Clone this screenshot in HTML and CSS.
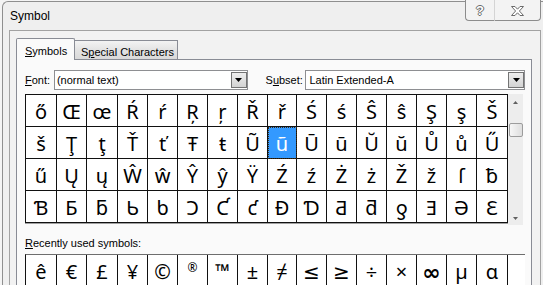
FILE: index.html
```html
<!DOCTYPE html>
<html>
<head>
<meta charset="utf-8">
<title>Symbol</title>
<link rel="stylesheet" href="styles.css">
</head>
<body>
<div class="window">
  <div class="titlebar">
    <span class="title">Symbol</span>
    <div class="caption-btns">
      <div class="cbtn help"><span class="qmark">?</span></div>
      <div class="cbtn close">
        <svg width="13" height="10" viewBox="0 0 13 10"><polygon points="0.5,0.5 4,0.5 6.5,3.2 9,0.5 12.5,0.5 8.4,5 12.5,9.5 9,9.5 6.5,6.8 4,9.5 0.5,9.5 4.6,5" fill="#fff" stroke="#6b6b6b" stroke-width="1"/></svg>
      </div>
    </div>
  </div>
  <div class="client">
    <div class="tabs">
      <div class="tab active"><u>S</u>ymbols</div>
      <div class="tab">S<u>p</u>ecial Characters</div>
    </div>
    <div class="pane">
      <div class="fields">
        <span class="lbl lbl-font"><u>F</u>ont:</span>
        <div class="combo combo-font">
          <span class="combo-text">(normal text)</span>
          <span class="drop"><svg width="7" height="4" viewBox="0 0 7 4"><polygon points="0,0 7,0 3.5,4" fill="#000"/></svg></span>
        </div>
        <span class="lbl lbl-subset">S<u>u</u>bset:</span>
        <div class="combo combo-subset">
          <span class="combo-text sub">Latin Extended-A</span>
          <span class="drop"><svg width="7" height="4" viewBox="0 0 7 4"><polygon points="0,0 7,0 3.5,4" fill="#000"/></svg></span>
        </div>
      </div>
      <div class="chart">
        <div class="grid">
          <div class="cell">ő</div><div class="cell">Œ</div><div class="cell">œ</div><div class="cell">Ŕ</div><div class="cell">ŕ</div><div class="cell">Ŗ</div><div class="cell">ŗ</div><div class="cell">Ř</div><div class="cell">ř</div><div class="cell">Ś</div><div class="cell">ś</div><div class="cell">Ŝ</div><div class="cell">ŝ</div><div class="cell">Ş</div><div class="cell">ş</div><div class="cell">Š</div>
          <div class="cell">š</div><div class="cell">Ţ</div><div class="cell">ţ</div><div class="cell">Ť</div><div class="cell">ť</div><div class="cell">Ŧ</div><div class="cell">ŧ</div><div class="cell">Ũ</div><div class="cell sel">ũ</div><div class="cell">Ū</div><div class="cell">ū</div><div class="cell">Ŭ</div><div class="cell">ŭ</div><div class="cell">Ů</div><div class="cell">ů</div><div class="cell">Ű</div>
          <div class="cell">ű</div><div class="cell">Ų</div><div class="cell">ų</div><div class="cell">Ŵ</div><div class="cell">ŵ</div><div class="cell">Ŷ</div><div class="cell">ŷ</div><div class="cell">Ÿ</div><div class="cell">Ź</div><div class="cell">ź</div><div class="cell">Ż</div><div class="cell">ż</div><div class="cell">Ž</div><div class="cell">ž</div><div class="cell">ſ</div><div class="cell">ƀ</div>
          <div class="cell">Ɓ</div><div class="cell">Ƃ</div><div class="cell">ƃ</div><div class="cell">Ƅ</div><div class="cell">ƅ</div><div class="cell">Ɔ</div><div class="cell">Ƈ</div><div class="cell">ƈ</div><div class="cell">Ɖ</div><div class="cell">Ɗ</div><div class="cell">Ƌ</div><div class="cell">ƌ</div><div class="cell">ƍ</div><div class="cell">Ǝ</div><div class="cell">Ə</div><div class="cell">Ɛ</div>
        </div>
        <div class="scrollbar">
          <div class="sb-arrow up"><svg width="5" height="3" viewBox="0 0 5 3"><polygon points="2.5,0 5,3 0,3" fill="#606060"/></svg></div>
          <div class="sb-thumb"></div>
          <div class="sb-track"></div>
          <div class="sb-arrow down"><svg width="5" height="3" viewBox="0 0 5 3"><polygon points="0,0 5,0 2.5,3" fill="#606060"/></svg></div>
        </div>
      </div>
      <div class="recent-label"><u>R</u>ecently used symbols:</div>
      <div class="grid recent">
        <div class="cell">ê</div><div class="cell">€</div><div class="cell">£</div><div class="cell">¥</div><div class="cell">©</div><div class="cell sup">®</div><div class="cell tm">™</div><div class="cell">±</div><div class="cell">≠</div><div class="cell">≤</div><div class="cell">≥</div><div class="cell">÷</div><div class="cell">×</div><div class="cell inf">∞</div><div class="cell">µ</div><div class="cell">α</div>
      </div>
    </div>
  </div>
</div>
</body>
</html>
```
FILE: styles.css
```css
* { box-sizing: border-box; }
html, body { margin: 0; padding: 0; }
body {
  width: 543px;
  height: 285px;
  overflow: hidden;
  background: #f4f4f4;
  font-family: "Liberation Sans", Arial, sans-serif;
  font-size: 11px;
  color: #000;
}
u { text-decoration: underline; text-underline-offset: 1px; }

.window {
  margin: 1px 0 0 2px;
  height: 284px;
  border-top: 1px solid #8f8f8f;
  border-left: 1px solid #8f8f8f;
  border-top-left-radius: 6px;
  background: #efefef;
  display: flex;
  flex-direction: column;
}

.titlebar {
  height: 28px;
  display: flex;
  align-items: flex-start;
  flex: none;
}
.title {
  padding: 7px 0 0 7px;
  font-size: 12px;
  line-height: 14px;
}
.caption-btns {
  margin: -2px 2px 0 auto;
  display: flex;
  height: 21px;
}
.cbtn {
  height: 21px;
  border: 1px solid #8c8c8c;
  border-top: none;
  background: #f3f3f3;
  display: flex;
  align-items: center;
  justify-content: center;
}
.help {
  width: 30px;
  border-right-color: #d4d4d4;
  border-bottom-left-radius: 4px;
}
.close {
  width: 46px;
  border-left: none;
  border-bottom-right-radius: 4px;
}
.qmark {
  font-size: 13px;
  font-weight: bold;
  line-height: 13px;
  color: #fff;
  text-shadow: 1px 0 0 #6b6b6b, -1px 0 0 #6b6b6b, 0 1px 0 #6b6b6b, 0 -1px 0 #6b6b6b;
  margin-top: 1px;
}
.close svg { margin-top: 1px; }

.client {
  flex: 1;
  margin: 0 2px 0 6px;
  border: 1px solid #a2a2a2;
  border-bottom: none;
  background: #f2f2f2;
  padding: 7px 8px 0 6px;
  display: flex;
  flex-direction: column;
}

.tabs {
  height: 21px;
  display: flex;
  align-items: flex-end;
  flex: none;
}
.tab {
  border: 1px solid #898c95;
  border-bottom: none;
  line-height: 14px;
  white-space: nowrap;
}
.tab.active {
  position: relative;
  z-index: 1;
  width: 59px;
  height: 22px;
  margin-bottom: -1px;
  padding: 5px 0 0 8px;
  background: #fafafa;
  border-radius: 2px 2px 0 0;
}
.tab:not(.active) {
  width: 104px;
  height: 19px;
  margin-left: -1px;
  padding: 4px 0 0 6px;
  background: linear-gradient(#f3f3f3, #e3e3e3 50%, #d9d9d9);
}

.pane {
  flex: 1;
  border: 1px solid #898c95;
  border-bottom: none;
  background: #fafafa;
  padding: 10px 6px 0 8px;
}

.fields {
  height: 20px;
  display: flex;
  align-items: center;
}
.lbl { line-height: 14px; }
.lbl-font { width: 29px; }
.lbl-subset { width: 40px; margin-left: 18px; }
.combo {
  height: 20px;
  border: 1px solid #8e8f92;
  background: #fff;
  display: flex;
  align-items: center;
}
.combo-font { width: 194px; }
.combo-subset { width: 220px; }
.combo-text { padding-left: 2px; line-height: 14px; }
.combo-text.sub { padding-left: 3px; }
.drop {
  margin-left: auto;
  width: 16px;
  height: 16px;
  border: 1px solid #747474;
  background: linear-gradient(#eeeeee, #d3d3d3);
  display: flex;
  align-items: center;
  justify-content: center;
}

.chart {
  margin-top: 4px;
  display: flex;
  align-items: flex-start;
}
.grid {
  display: grid;
  grid-template-columns: 31px 30px 31px 30px 30px 30px 30px 30px 29px 30px 30px 30px 30px 30px 30px 31px;
  border-top: 1px solid #111;
  border-left: 1px solid #111;
  background: #fff;
  box-shadow: 0 1px 0 #a0a0a0;
}
.cell {
  height: 32px;
  border-right: 1px solid #111;
  border-bottom: 1px solid #111;
  display: flex;
  align-items: center;
  justify-content: center;
  padding-top: 1px;
  font-family: "Noto Sans", "DejaVu Sans", sans-serif;
  font-size: 20px;
  line-height: normal;
  color: #000;
}
.cell.sel {
  background: #3399ff;
  color: #fff;
  outline: 1px dotted #3a2a10;
  outline-offset: -1px;
}
.cell.sup {
  align-items: flex-start;
  font-size: 12px;
  line-height: 16px;
  padding-top: 5px;
}
.cell.tm { font-size: 19px; }
.cell.inf { font-weight: bold; font-size: 22px; }

.scrollbar {
  width: 15px;
  height: 131px;
  background: #ededed;
  display: flex;
  flex-direction: column;
}
.sb-arrow {
  display: flex;
  align-items: center;
  justify-content: center;
}
.sb-arrow.up { height: 17px; }
.sb-arrow.down { height: 14px; }
.sb-thumb {
  margin: 12px 0 0 1px;
  width: 14px;
  height: 14px;
  border: 1px solid #9c9c9c;
  border-radius: 2px;
  background: linear-gradient(90deg, #f6f6f6, #dedede);
}
.sb-track { flex: 1; }

.recent-label {
  margin-top: 11px;
  line-height: 14px;
}
.grid.recent {
  margin-top: 4px;
  border-top-color: #6e6e6e;
  box-shadow: none;
}
```
